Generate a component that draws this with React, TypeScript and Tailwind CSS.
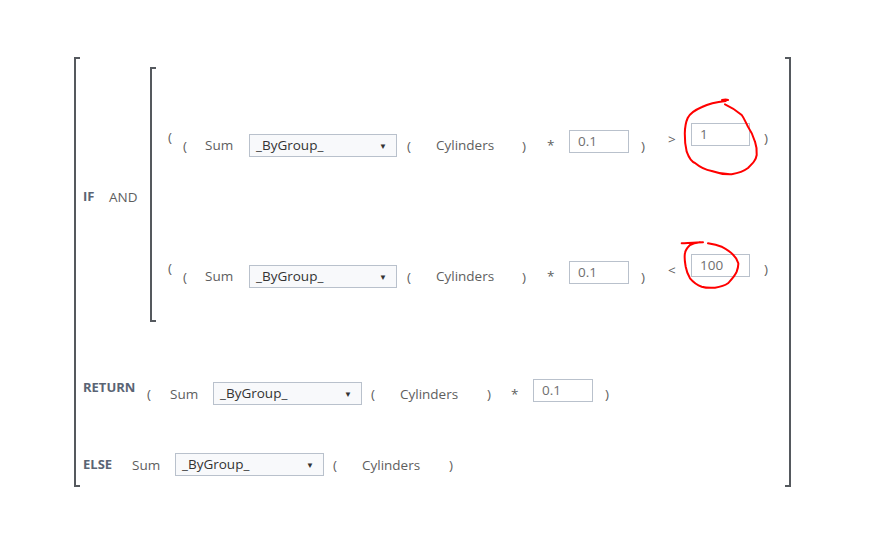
import React from 'react';

const FONT = { fontFamily: '"Open Sans", "Liberation Sans", sans-serif' };

function Tok({ w, mt = 0, ml = 0, children }: { w?: number; mt?: number; ml?: number; children: React.ReactNode }) {
  return (
    <span
      className="block shrink-0 text-[13.5px] leading-[20px] text-[#5e5e5e] whitespace-nowrap"
      style={{ width: w, marginTop: mt, marginLeft: ml }}
    >
      {children}
    </span>
  );
}

function Select({ mt = 0, w = 148 }: { mt?: number; w?: number }) {
  return (
    <div
      className="flex h-[23px] shrink-0 items-center justify-between border border-[#b9c1cc] bg-[#f8f9fb] pl-[6px] pr-[9px] text-[13.5px] text-[#333]"
      style={{ width: w, marginTop: mt }}
    >
      <span>_ByGroup_</span>
      <span className="text-[8px] text-[#333]">▼</span>
    </div>
  );
}

function Input({ value, mt = 0, w = 60 }: { value: string; mt?: number; w?: number }) {
  return (
    <div
      className="flex h-[23px] shrink-0 items-center border border-[#b9c1cc] bg-white pl-[8px] text-[13.5px] text-[#6f6f6f]"
      style={{ width: w, marginTop: mt }}
    >
      {value}
    </div>
  );
}

function CondRow({ op, value }: { op: string; value: string }) {
  return (
    <div className="flex h-[40px] items-start">
      <Tok w={15} ml={12} mt={4}>(</Tok>
      <Tok w={22} mt={13}>(</Tok>
      <Tok w={44} mt={12}>Sum</Tok>
      <Select mt={11} />
      <Tok w={29} ml={10} mt={13}>(</Tok>
      <Tok w={86} mt={12}>Cylinders</Tok>
      <Tok w={25} mt={13}>)</Tok>
      <Tok w={22} mt={12}>*</Tok>
      <Input value="0.1" mt={7} />
      <Tok w={27} ml={12} mt={13}>)</Tok>
      <Tok w={23} mt={6}>{op}</Tok>
      <Input value={value} w={59} />
      <Tok ml={14} mt={5}>)</Tok>
    </div>
  );
}

export default function App() {
  return (
    <div className="relative h-[559px] w-[886px] bg-white" style={FONT}>
      <div className="ml-[74px] pt-[57px]">
        <div className="flex h-[430px] w-[717px]">
          <div className="w-[6px] shrink-0 border-y-2 border-l-2 border-[#55595e]" />
          <div className="flex flex-1 flex-col pt-[10px]">
            {/* IF */}
            <div className="flex items-center">
              <span className="ml-[3px] mt-[5px] w-[26px] text-[13px] font-bold text-[#5a6474]">IF</span>
              <span className="mt-[5px] w-[41px] text-[13.5px] text-[#5e5e5e]">AND</span>
              <div className="flex h-[255px]">
                <div className="w-[6px] shrink-0 border-y-2 border-l-2 border-[#55595e]" />
                <div className="flex flex-col gap-[91px] pt-[56px]">
                  <CondRow op=">" value="1" />
                  <CondRow op="<" value="100" />
                </div>
              </div>
            </div>

            {/* RETURN */}
            <div className="mt-[55px] flex h-[30px] items-start">
              <span className="ml-[3px] w-[64px] shrink-0 text-[13px] font-bold leading-[20px] text-[#5a6474]">RETURN</span>
              <Tok w={23} mt={7}>(</Tok>
              <Tok w={43} mt={7}>Sum</Tok>
              <Select mt={5} w={149} />
              <Tok w={29} ml={9} mt={7}>(</Tok>
              <Tok w={87} mt={7}>Cylinders</Tok>
              <Tok w={24} mt={7}>)</Tok>
              <Tok w={22} mt={7}>*</Tok>
              <Input value="0.1" mt={2} />
              <Tok ml={12} mt={7}>)</Tok>
            </div>

            {/* ELSE */}
            <div className="mt-[46px] flex h-[23px] items-start">
              <span className="ml-[3px] mt-[1px] w-[49px] shrink-0 text-[13px] font-bold leading-[20px] text-[#5a6474]">ELSE</span>
              <Tok w={43} mt={2}>Sum</Tok>
              <Select w={149} />
              <Tok w={29} ml={9} mt={2}>(</Tok>
              <Tok w={87} mt={2}>Cylinders</Tok>
              <Tok mt={2}>)</Tok>
            </div>
          </div>
          <div className="w-[6px] shrink-0 border-y-2 border-r-2 border-[#55595e]" />
        </div>
      </div>

      {/* hand-drawn annotations */}
      <svg className="pointer-events-none absolute left-0 top-0" width="886" height="559" fill="none" stroke="#ff0000" strokeWidth="2" strokeLinecap="round" strokeLinejoin="round">
        <path d="M722 100 Q726 99 728 100 M725.7 101 C716 102 708 104 702 107 C695 110 690 113 687.7 118 C684 126 684 140 686.7 151.7 C689 158 692 162 695 163 C701 168 706 170 711.7 171 C720 174 726 174.5 731.7 174.3 C739 173 744 171 748 168 C753 163 756 160 756.7 155 C757 150 756.5 146 755 141.7 C753 135 751 131 748 126.7 C745 121 744 118 741.7 115 C736 110 731 107 725 104.3" />
        <path d="M681.7 243.3 C688 243 696 242.5 703 242.3 M700 242.3 C695 243 692 244 690 245 C687 248 685.5 250 685 253 C684 258 685 262 685.7 266.7 C686.5 271 688 275 690 278.3 C694 283 697 285 701.7 286.7 C706 288 710 288 715 287.7 C720 287 725 285.5 728 283.3 C732 279 735 276 736.7 271.7 C738 268 738.5 266 738.3 263.3 C737.5 260 736 257.5 733.3 255 C730 251 726 249 721.7 246.7 C717 245 712 244 708 243.3" />
      </svg>
    </div>
  );
}
